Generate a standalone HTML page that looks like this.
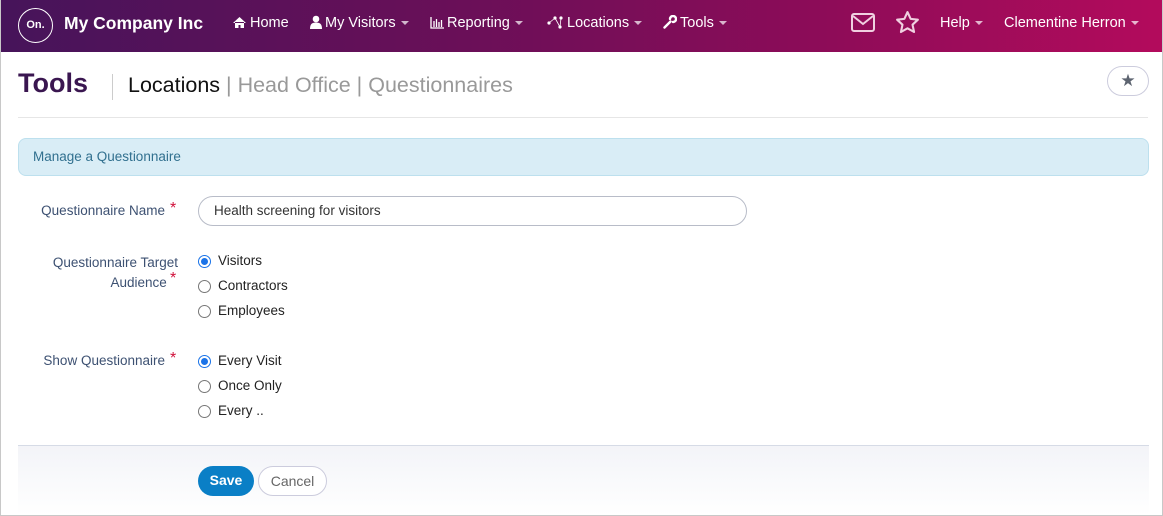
<!DOCTYPE html>
<html><head><style>
*{box-sizing:border-box;margin:0;padding:0}
body{width:1163px;height:516px;overflow:hidden;font-family:"Liberation Sans",sans-serif;background:#fff;position:relative}
.frame{position:absolute;left:0;top:0;width:1163px;height:516px;border:1px solid #c8c8c8;border-top:none;pointer-events:none}
.nav{position:absolute;left:0;top:0;width:1163px;height:52px;background:linear-gradient(90deg,#46145a 0%,#6a0f58 40%,#8c0c58 70%,#b30b5c 100%);color:#fff;font-size:14.5px}
.nav span{position:absolute;top:15px;white-space:nowrap}
.nav svg{vertical-align:-2px;margin-right:3px}
.car{display:inline-block;border-left:4px solid transparent;border-right:4px solid transparent;border-top:4px solid rgba(255,255,255,.7);vertical-align:middle;margin-left:5px}
.logo{position:absolute;left:18px;top:8px;width:35px;height:35px;border:1.5px solid #fff;border-radius:50%;font-size:11px;font-weight:bold;text-align:center;line-height:32px}
.abs{position:absolute;white-space:nowrap}
.lbl{color:#3d5172;font-size:13.5px;text-align:right}
.star{color:#d0103a}
.opt{font-size:13.5px;color:#222}
.radio{position:absolute;width:13px;height:13px;border:1px solid #777;border-radius:50%;background:#fff}
.radio.on{border:1px solid #1a73e8}
.radio.on:after{content:"";position:absolute;left:2px;top:2px;width:7px;height:7px;border-radius:50%;background:#1a73e8}
</style></head><body>
<div class="nav">
<div class="logo">On.</div>
<span style="left:64px;top:13px;font-size:17.5px;font-weight:bold">My Company Inc</span>
<span style="left:232px"><svg width="15" height="13" viewBox="0 0 15 13"><path d="M1 7L7.5 1 14 7M3 6v6h3.5V9h2v3H12V6" fill="#fff"/></svg>Home</span>
<span style="left:310px"><svg width="12" height="14" viewBox="0 0 12 14"><circle cx="6" cy="4" r="3.3" fill="#fff"/><path d="M0 14c0-5 2-6.5 6-6.5s6 1.5 6 6.5z" fill="#fff"/></svg>My Visitors<i class="car"></i></span>
<span style="left:430px"><svg width="14" height="12" viewBox="0 0 14 12"><path d="M1 0v11h13" stroke="#fff" fill="none" stroke-width="1.3"/><path d="M4 4v6M6.5 2v8M9 5v5M11.5 3v7" stroke="#fff" stroke-width="1.3"/></svg>Reporting<i class="car"></i></span>
<span style="left:547px"><svg width="17" height="13" viewBox="0 0 17 13"><circle cx="2" cy="7" r="1.6" fill="#fff"/><circle cx="8" cy="2" r="1.6" fill="#fff"/><circle cx="14" cy="2" r="1.6" fill="#fff"/><circle cx="13" cy="11" r="1.6" fill="#fff"/><path d="M2 7l6-5M8 2l5 9M14 2l-1 9" stroke="#fff" stroke-width=".8"/></svg>Locations<i class="car"></i></span>
<span style="left:663px"><svg width="14" height="14" viewBox="0 0 14 14"><path d="M1.5 12.5l6-6M7 4a3 3 0 1 1 3 3" stroke="#fff" stroke-width="2.4" fill="none" stroke-linecap="round"/></svg>Tools<i class="car"></i></span>
<svg style="position:absolute;left:851px;top:13px" width="24" height="19" viewBox="0 0 24 19"><rect x="1" y="1" width="22" height="17" rx="2" fill="none" stroke="#f0d0e0" stroke-width="2"/><path d="M2 3l10 8 10-8" fill="none" stroke="#f0d0e0" stroke-width="2"/></svg>
<svg style="position:absolute;left:895px;top:10px" width="25" height="25" viewBox="0 0 24 24"><path d="M12 2l3 6.5 7 .8-5.2 4.8 1.5 7L12 17.6 5.7 21.1l1.5-7L2 9.3l7-.8z" fill="none" stroke="#f0d0e0" stroke-width="2" stroke-linejoin="round"/></svg>
<span style="left:940px">Help<i class="car"></i></span>
<span style="left:1004px">Clementine Herron<i class="car"></i></span>
</div>
<div class="abs" style="left:18px;top:68px;font-size:27px;font-weight:bold;color:#3a1650">Tools</div>
<div class="abs" style="left:112px;top:74px;height:26px;border-left:1px solid #ccc"></div>
<div class="abs" style="left:128px;top:73px;font-size:21.5px;color:#111">Locations <span style="color:#999">| Head Office | Questionnaires</span></div>
<div class="abs" style="left:1107px;top:66px;width:42px;height:30px;border:1px solid #ccd;border-radius:15px;text-align:center;line-height:27px;color:#5d6470;font-size:17px">★</div>
<div class="abs" style="left:18px;top:117px;width:1130px;border-top:1px solid #e6e6e6"></div>
<div class="abs" style="left:18px;top:138px;width:1131px;height:38px;background:#d9edf6;border:1px solid #bde0ee;border-radius:8px;color:#31708f;font-size:13.5px;padding:10px 14px">Manage a Questionnaire</div>
<div class="abs lbl" style="right:998px;top:203px">Questionnaire Name</div><span class="abs star" style="left:170px;top:200px">*</span>
<div class="abs" style="left:198px;top:196px;width:549px;height:30px;border:1px solid #b8bcc8;border-radius:15px;padding:6px 15px;font-size:13.5px;color:#333">Health screening for visitors</div>
<div class="abs lbl" style="right:985px;top:253px;line-height:20px">Questionnaire Target<br>Audience&nbsp;&nbsp;&nbsp;</div><span class="abs star" style="left:170px;top:270px">*</span>
<div class="radio on" style="left:198px;top:255px"></div><div class="abs opt" style="left:218px;top:253px">Visitors</div>
<div class="radio" style="left:198px;top:280px"></div><div class="abs opt" style="left:218px;top:278px">Contractors</div>
<div class="radio" style="left:198px;top:305px"></div><div class="abs opt" style="left:218px;top:303px">Employees</div>
<div class="abs lbl" style="right:998px;top:353px">Show Questionnaire</div><span class="abs star" style="left:170px;top:350px">*</span>
<div class="radio on" style="left:198px;top:355px"></div><div class="abs opt" style="left:218px;top:353px">Every Visit</div>
<div class="radio" style="left:198px;top:380px"></div><div class="abs opt" style="left:218px;top:378px">Once Only</div>
<div class="radio" style="left:198px;top:405px"></div><div class="abs opt" style="left:218px;top:403px">Every ..</div>
<div class="abs" style="left:18px;top:445px;width:1131px;height:70px;border-top:1px solid #d6dbe6;background:linear-gradient(#f3f4f8,#fff)"></div>
<div class="abs" style="left:198px;top:466px;width:56px;height:30px;background:#0a7fc6;border-radius:15px;color:#fff;font-size:14px;font-weight:bold;text-align:center;line-height:29px">Save</div>
<div class="abs" style="left:258px;top:466px;width:69px;height:30px;border:1px solid #ccd;background:#fff;border-radius:15px;color:#666;font-size:14px;text-align:center;line-height:28px">Cancel</div>
<div class="frame"></div>
</body></html>
